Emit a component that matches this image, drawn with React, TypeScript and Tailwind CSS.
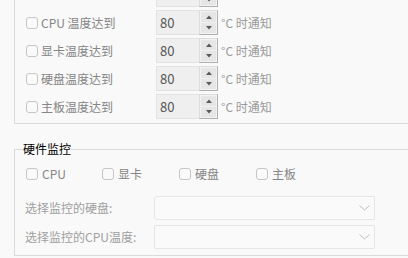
import React from "react";

const FONT = { fontFamily: '"Noto Sans CJK SC", "Noto Sans", sans-serif' };

function Box({ dark }: { dark?: boolean }) {
  return (
    <span
      className={
        "block w-[12px] h-[12px] shrink-0 rounded-[3px] border bg-[#fafafa] " +
        (dark ? "border-[#707070]" : "border-[#c6c6c6]")
      }
    />
  );
}

function Spin({ value }: { value: string }) {
  return (
    <div className="flex h-[25px] w-[62px] shrink-0">
      <div className="flex-1 flex items-center pl-[3px] bg-[#efefef] border border-r-0 border-[#e2e2e2] text-[13px] text-[#555] leading-none">
        {value}
      </div>
      <div className="w-[19px] flex flex-col border border-t-[#dcdcdc] border-l-[#dcdcdc] border-r-[#b0b0b0] border-b-[#b0b0b0] bg-[#f2f2f2] p-px gap-px">
        <div className="flex-1 flex items-center justify-center bg-[#e6e6e6]">
          <svg width="6" height="4" viewBox="0 0 6 4">
            <path d="M0 4 L3 0.5 L6 4 Z" fill="#5a5a5a" />
          </svg>
        </div>
        <div className="flex-1 flex items-center justify-center bg-[#e6e6e6]">
          <svg width="6" height="4" viewBox="0 0 6 4">
            <path d="M0 0 L6 0 L3 3.5 Z" fill="#5a5a5a" />
          </svg>
        </div>
      </div>
    </div>
  );
}

function TempRow({ label, dark }: { label: string; dark?: boolean }) {
  return (
    <div className="flex items-center h-[25px]">
      <span className={dark ? "mb-[6px]" : ""}>
        <Box dark={dark} />
      </span>
      <span
        className={
          "ml-[3px] w-[115px] text-[12px] leading-none whitespace-nowrap " +
          (dark ? "text-black font-bold mb-[6px]" : "text-[#858585]")
        }
      >
        {label}
      </span>
      <Spin value="80" />
      <span
        className={
          "ml-[3px] text-[12px] leading-none whitespace-nowrap " +
          (dark ? "text-black font-bold mb-[6px]" : "text-[#9a9a9a]")
        }
      >
        °C 时通知
      </span>
    </div>
  );
}

function Check({ label, w }: { label: string; w: string }) {
  return (
    <div className={"flex items-center gap-[4px] " + w}>
      <Box />
      <span className="text-[12px] leading-none text-[#858585] whitespace-nowrap">{label}</span>
    </div>
  );
}

function Combo({ label }: { label: string }) {
  return (
    <div className="flex items-center h-[24px]">
      <span className="w-[139px] pl-[10px] text-[12px] leading-none text-[#a0a0a0] whitespace-nowrap">
        {label}
      </span>
      <div className="w-[221px] h-[24px] flex items-center justify-end pr-[4px] bg-[#fafafa] border border-[#e6e6e6] rounded-[2px]">
        <svg width="11" height="6" viewBox="0 0 11 6">
          <polyline points="0.5,0.5 5.5,5 10.5,0.5" fill="none" stroke="#bdbdbd" strokeWidth="1" />
        </svg>
      </div>
    </div>
  );
}

export default function App() {
  return (
    <div className="w-[408px] h-[258px] overflow-hidden bg-[#f9f9f9]" style={FONT}>
      <div className="ml-[14px] w-[420px] mt-[-18px] border-l border-b border-[#dadada] pl-[11px] pb-[4px] flex flex-col gap-[3px]">
        <TempRow label="温度过高时提醒" dark />
        <TempRow label="CPU 温度达到" />
        <TempRow label="显卡温度达到" />
        <TempRow label="硬盘温度达到" />
        <TempRow label="主板温度达到" />
      </div>
      <fieldset className="ml-[14px] mt-[17px] w-[420px] border border-[#dadada] pb-[6px]">
        <legend className="ml-[8px] text-[12px] leading-[16px] text-black">硬件监控</legend>
        <div className="flex items-center h-[16px] mt-[9px] pl-[11px]">
          <Check label="CPU" w="w-[76px]" />
          <Check label="显卡" w="w-[77px]" />
          <Check label="硬盘" w="w-[77px]" />
          <Check label="主板" w="w-[77px]" />
        </div>
        <div className="mt-[14px] flex flex-col gap-[5px]">
          <Combo label="选择监控的硬盘:" />
          <Combo label="选择监控的CPU温度:" />
        </div>
      </fieldset>
    </div>
  );
}
